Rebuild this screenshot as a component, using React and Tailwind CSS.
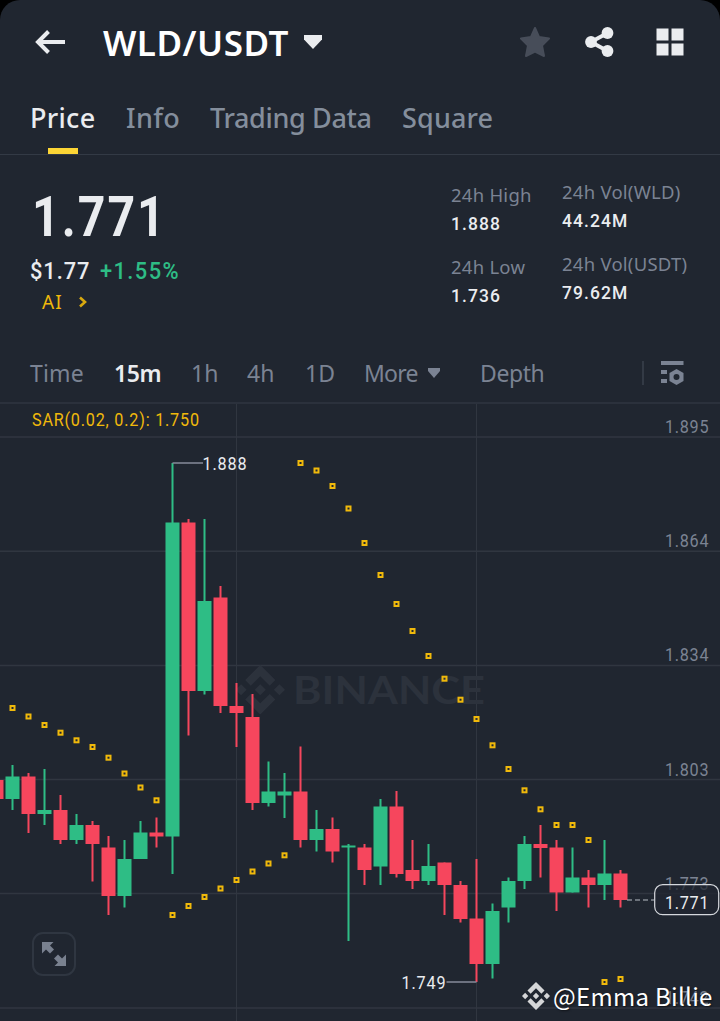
import React from "react";

const UP = "#2ebd85";
const DOWN = "#f6465d";

// [high, bodyTop, bodyBottom, low, rising]; one candle every 16 units
const candles = [
  [780, 780, 799, 799, 0], [765, 776.5, 799, 810, 1], [773, 776.5, 814, 833, 0], [769, 810, 814, 825, 1],
  [795, 810, 840, 844, 0], [814, 825, 840, 844, 1], [821, 825, 844, 881.5, 0], [836, 847.5, 896, 915, 0],
  [840, 859, 896, 907.5, 1], [821, 832.5, 859, 859, 1], [817.5, 832.5, 836.5, 847.5, 0], [463, 522.5, 836.5, 874, 1],
  [519, 522.5, 691, 735.5, 0], [519, 601, 691, 694.5, 1], [586, 597.5, 706, 713, 0], [683, 706, 713, 747, 0],
  [694, 717, 803, 810, 0], [761.5, 791.5, 803, 806.5, 1], [773, 791.5, 795.5, 818, 1], [746.5, 791.5, 840, 847.5, 0],
  [810, 829, 840, 851.5, 1], [817.5, 829, 851.5, 862.5, 0], [844, 845.5, 847.5, 941, 1], [844, 847.5, 870, 885, 0],
  [799, 806.5, 866.5, 885, 1], [791, 806.5, 874, 877.5, 0], [840, 870, 881, 889, 0], [844, 866, 881, 885, 1],
  [862.5, 862.5, 885, 915, 0], [881, 885, 919, 922.5, 0], [859, 918.5, 964, 982, 0], [903.5, 911, 964, 978.5, 1],
  [877.5, 881, 907.5, 922.5, 1], [836, 844, 881, 889, 1], [825, 844, 848, 877.5, 0], [840, 847.5, 892.5, 911, 0],
  [847.5, 877.5, 892.5, 892.5, 1], [870, 877.5, 885, 907.5, 0], [840, 873.5, 885, 900, 1], [870, 873.5, 900, 907.5, 0],
];

const sar = [
  708, 716.5, 725, 732.7, 740.3, 747, 757.7, 773.5, 787.5, 800.3, 915, 906, 897, 888.5, 880, 871.5, 863.5, 855.3,
  463, 470.5, 486, 508.5, 543, 575, 604, 631, 656, 678.7, 699.7, 719, 745.3, 769, 790.3, 809.3, 825, 825, 840, 982, 979,
];

const axis = [
  ["1.895", 432.7], ["1.864", 547], ["1.834", 661], ["1.803", 776], ["1.773", 890], ["1.742", 1004],
];

const MARK =
  "M12 0 19.3 7.3 16.6 10 12 5.4 7.4 10 4.7 7.3zM0 12l2.7-2.7L5.4 12l-2.7 2.7zM18.6 12l2.7-2.7L24 12l-2.7 2.7zM12 9.3l2.7 2.7-2.7 2.7L9.3 12zM7.4 14l4.6 4.6 4.6-4.6 2.7 2.7L12 24l-7.3-7.3z";

// Condensed label: narrower glyphs spread over the given width
function Label({ x, y, width, fill, children }) {
  return (
    <text transform={`translate(${x} ${y}) scale(.9 1)`} textLength={width / 0.9} fill={fill}>
      {children}
    </text>
  );
}

function Chart() {
  return (
    <svg viewBox="0 402 720 619" className="block h-[619px] w-full font-[Roboto,sans-serif]" fontSize="18">
      <g stroke="#303640">
        <path d="M0 403H720" strokeWidth="2" stroke="#2b313c" />
        {[437, 551.3, 665.5, 779.5, 893.5, 1008].map((y) => (
          <path key={y} d={`M0 ${y}H720`} strokeWidth="1.4" />
        ))}
        <path d="M236.5 404V1021M476.5 404V1021" />
      </g>
      <g fill="#2c323c">
        <svg x="235.500" y="665" width="49.500" height="49.500" viewBox="0 0 24 24">
          <path d={MARK} />
        </svg>
        <text x="293" y="703.5" fontSize="38" fontWeight="700" textLength="192" lengthAdjust="spacingAndGlyphs" fontFamily="Lato, sans-serif">BINANCE</text>
      </g>
      {axis.map(([t, y]) => (
        <Label key={t} x={665} y={y} width={43.500} fill="#7b8393">{t}</Label>
      ))}
      {candles.map(([h, t, b, l, up], i) => {
        const x = -3.5 + i * 16;
        return (
          <g key={i} fill={up ? UP : DOWN}>
            <rect x={x - 1} y={h} width="2" height={l - h} />
            <rect x={x - 7} y={t} width="14" height={b - t} />
          </g>
        );
      })}
      <g fill="none" stroke="#f0b90b" strokeWidth="2">
        {sar.map((y, i) => (
          <rect key={i} x={10.5 + i * 16} y={y - 2} width="4" height="4" />
        ))}
      </g>
      <path d="M172.5 463H203M446.500 982H476.500" stroke="#858b99" strokeWidth="1.6" />
      <Label x={202.5} y={470} width={44} fill="#eaecef">1.888</Label>
      <Label x={401.5} y={989} width={44} fill="#eaecef">1.749</Label>
      <Label x={32} y={426} width={167} fill="#f0b90b">SAR(0.02, 0.2): 1.750</Label>
      <path d="M627 900H654" stroke="#b7bdc6" strokeWidth="1.2" strokeDasharray="5 3" />
      <rect x="654.700" y="884.700" width="64" height="30" rx="8" fill="#202630" fillOpacity=".75" stroke="#d5d8dd" strokeWidth="1.2" />
      <Label x={665} y={909} width={43.500} fill="#eaecef">1.771</Label>
      <rect x="33" y="933" width="42" height="42" rx="10" fill="none" stroke="#2f3641" strokeWidth="2" />
      <path d="M42 942H53.500L50 945.500 54 949.500 50 953.500 46 949.500 42 953.500zM66 966H54.500L58 962.500 54 958.500 58 954.500 62 958.500 66 954.500z" fill="#79818f" />
    </svg>
  );
}

function Stat({ label, value }) {
  return (
    <div className="flex h-[72px] flex-col">
      <span className="whitespace-nowrap font-['Noto_Sans',sans-serif] text-[18.500px] leading-[28px] tracking-[0.250px] text-[#7b8393]">{label}</span>
      <span className="mt-px origin-left scale-x-[.92] whitespace-nowrap font-[Roboto,sans-serif] text-[19px] font-medium leading-[28px] tracking-[1.200px] text-[#eaecef]">{value}</span>
    </div>
  );
}

export default function App() {
  return (
    <div className="h-[1021px] w-[720px] overflow-hidden bg-black">
      <div className="relative flex h-full flex-col overflow-hidden rounded-t-[20px] bg-[#202630] font-['Noto_Sans',sans-serif]">
        <header className="flex h-[84px] items-center pl-[35px] pr-[36px] text-[#eaecef]">
          <svg className="h-6 w-[30px]" viewBox="0 0 30 24" fill="none" stroke="currentColor" strokeWidth="4">
            <path d="M30 12H3M13.500 1.500 3 12 13.500 22.500" />
          </svg>
          <h1 className="ml-[38px] w-[186px] whitespace-nowrap pt-[2px] text-[35px] font-semibold leading-[40px] tracking-[0.500px] text-white">WLD/USDT</h1>
          <svg className="ml-[15px] h-[14px] w-[18px]" viewBox="0 0 18 14" fill="currentColor">
            <path d="M0 0H18V4.500L9 14 0 4.500z" />
          </svg>
          <svg className="ml-auto h-[30px] w-[30px]" viewBox="0 0 30 30" fill="#474d59" stroke="#474d59" strokeWidth="2" strokeLinejoin="round">
            <path d="M15 1 19 10 29 11.500 22 18.500 24 29 15 24.500 6 29 8 18.500 1 11.500 11 10z" />
          </svg>
          <svg className="ml-[35px] h-[30px] w-[29px]" viewBox="0 0 29 30" fill="currentColor">
            <path d="M6 15 22.500 6M6 15 22.500 24" stroke="currentColor" strokeWidth="3.800" />
            <circle cx="6" cy="15" r="5.900" /><circle cx="22.500" cy="6" r="5.900" /><circle cx="22.500" cy="24" r="5.900" />
          </svg>
          <svg className="ml-[42px] h-7 w-7" viewBox="0 0 28 28" fill="currentColor">
            <path d="M0.500 0.500h12v12h-12zM15.500 0.500h12v12h-12zM0.500 15.500h12v12h-12zM15.500 15.500h12v12h-12z" />
          </svg>
        </header>

        <nav className="flex h-[71px] border-b border-[#333a45] pl-[30px] text-[27px] font-medium text-[#848e9c]">
          <div className="flex w-[96px] flex-col justify-between text-[#eaecef]">
            <span className="mt-[14px] leading-[40px] tracking-[0.300px]">Price</span>
            <span className="ml-[18px] h-1.5 w-[30px] bg-[#fcd535]" />
          </div>
          <span className="mt-[14px] w-[84px] leading-[40px] tracking-[0.400px]">Info</span>
          <span className="mt-[14px] w-[192px] whitespace-nowrap leading-[40px] tracking-[-0.350px]">Trading Data</span>
          <span className="mt-[14px] leading-[40px] tracking-[0.150px]">Square</span>
        </nav>

        <section className="flex h-[190px]">
          <div className="w-[451px] pl-[30px] pt-[31px]">
            <div className="ml-[2px] origin-left scale-x-[.86] font-[Roboto,sans-serif] text-[56px] font-bold leading-[62px] tracking-[2.400px] text-[#eaecef]">1.771</div>
            <div className="mt-[7px] flex gap-[10px] whitespace-nowrap font-[Roboto,sans-serif] text-[23.500px] font-medium leading-[32px]">
              <span className="w-[60px] origin-left scale-x-[.93] tracking-[1px] text-[#eaecef]">$1.77</span>
              <span className="origin-left scale-x-[.93] tracking-[1.500px] text-[#2ebd85]">+1.55%</span>
            </div>
            <div className="flex items-center pl-[12px] text-[19px] leading-[30px] tracking-[1.200px] text-[#f0b90b]">
              AI
              <svg className="ml-[16px] h-3 w-2" viewBox="0 0 8 12" fill="none" stroke="#d9a90f" strokeWidth="2.600"><path d="M1 1.500 6 6 1 10.500" /></svg>
            </div>
          </div>
          <div className="w-[111px] pt-[26px]">
            <Stat label="24h High" value="1.888" />
            <Stat label="24h Low" value="1.736" />
          </div>
          <div className="pt-[23px]">
            <Stat label="24h Vol(WLD)" value="44.24M" />
            <Stat label="24h Vol(USDT)" value="79.62M" />
          </div>
        </section>

        <div className="flex h-[57px] items-center pb-[2px] pl-[30px] pr-[36px] text-[23px] leading-[32px] text-[#7b8393]">
          <span className="w-[84px] tracking-[0.200px]">Time</span>
          <span className="w-[77px] font-semibold tracking-[-0.400px] text-[#eaecef]">15m</span>
          <span className="w-[56px]">1h</span>
          <span className="w-[58px]">4h</span>
          <span className="w-[59px]">1D</span>
          <span className="w-[64px] tracking-[-0.800px]">More</span>
          <svg className="h-[10px] w-[12px]" viewBox="0 0 12 10" fill="currentColor"><path d="M0 0H12V3L6 10 0 3z" /></svg>
          <span className="ml-[40px] tracking-[-0.400px]">Depth</span>
          <span className="ml-auto h-6 w-0.5 bg-[#333a45]" />
          <svg className="ml-4 h-6 w-6" viewBox="0 0 24 24" fill="currentColor">
            <path d="M1 0h22.500v4H1zM1 9h6v4H1zM1 18h6v4H1zM9.500 12 16.500 8 23.500 12V20L16.500 24 9.500 20zM16.500 13a3 3 0 1 0 0 6 3 3 0 0 0 0-6" fillRule="evenodd" />
          </svg>
        </div>
        <Chart />

        <div className="absolute bottom-[7px] left-[522px] flex items-center whitespace-nowrap font-['Noto_Sans_CJK_SC',sans-serif] text-[24px] leading-[36px] tracking-[0.300px] text-white [text-shadow:1px_1px_2px_#0008]">
          <svg viewBox="0 0 24 24" className="mr-[3px] h-7 w-7 text-[#d5d6d8]" fill="currentColor">
            <path d={MARK} />
          </svg>
          @Emma Billie
        </div>
      </div>
    </div>
  );
}
